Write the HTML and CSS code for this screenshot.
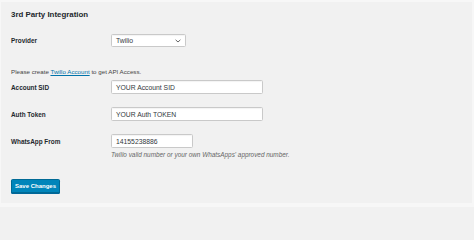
FILE: index.html
```html
<!DOCTYPE html>
<html>
<head>
<meta charset="utf-8">
<link rel="stylesheet" href="styles.css">
</head>
<body>
<div class="wrap">
  <h2 class="title">3rd Party Integration</h2>
  <div class="row row-provider">
    <div class="label">Provider</div>
    <div class="field">
      <div class="select">
        <span>Twilio</span>
        <svg class="chev" width="6" height="4" viewBox="0 0 6 4"><path d="M0.6 0.8 L3 3 L5.4 0.8" fill="none" stroke="#555" stroke-width="0.9"/></svg>
      </div>
    </div>
  </div>
  <p class="notice">Please create <a href="#">Twillo Account</a> to get API Access.</p>
  <div class="row row-first">
    <div class="label">Account SID</div>
    <div class="field"><div class="input wide">YOUR Account SID</div></div>
  </div>
  <div class="row">
    <div class="label">Auth Token</div>
    <div class="field"><div class="input wide">YOUR Auth TOKEN</div></div>
  </div>
  <div class="row">
    <div class="label">WhatsApp From</div>
    <div class="field"><div class="input short">14155238886</div></div>
  </div>
  <p class="desc">Twilio valid number or your own WhatsApps' approved number.</p>
  <button class="btn">Save Changes</button>
</div>
</body>
</html>
```
FILE: styles.css
```css
html {
  margin: 0;
  padding: 0;
  background: #f1f1f1;
}
body {
  margin: 0;
  padding: 0;
  width: 474px;
  height: 207px;
  box-sizing: border-box;
  background: #f1f1f1;
  border-style: solid;
  border-color: #f7f7f7;
  border-width: 2px 2px 4px 1px;
  font-family: "Liberation Sans", Arial, sans-serif;
  color: #444;
  overflow: hidden;
}
.wrap {
  padding-left: 10px;
  display: flex;
  flex-direction: column;
  align-items: flex-start;
}
.title {
  margin: 7px 0 0;
  font-size: 7.9px;
  line-height: 12px;
  font-weight: bold;
  color: #23282d;
}
.row {
  display: flex;
  align-items: center;
  margin-top: 13px;
  height: 14px;
}
.row-provider {
  margin-top: 13px;
  height: 13px;
}
.row-first {
  margin-top: 3px;
}
.label {
  width: 100px;
  font-size: 6.4px;
  font-weight: bold;
  color: #23282d;
}
.field {
  display: flex;
  height: 100%;
}
.select, .input {
  box-sizing: border-box;
  height: 100%;
  background: #fff;
  border: 1px solid #c9c9c9;
  border-radius: 1.5px;
  box-shadow: inset 0 1px 1px rgba(0,0,0,0.05);
  font-size: 6.8px;
  color: #32373c;
  display: flex;
  align-items: center;
  padding-left: 4px;
}
.select {
  width: 75px;
  justify-content: space-between;
  padding-right: 4px;
}
.chev {
  display: block;
}
.wide {
  width: 152px;
}
.short {
  width: 82px;
}
.notice {
  margin: 20px 0 0;
  font-size: 6.2px;
  line-height: 10px;
  color: #444;
}
.notice a {
  color: #0073aa;
  text-decoration: underline;
}
.desc {
  margin: 2px 0 0 100px;
  font-size: 6.4px;
  line-height: 9px;
  font-style: italic;
  color: #666;
}
.btn {
  margin-top: 20px;
  box-sizing: border-box;
  width: 49px;
  height: 14px;
  padding: 0;
  background: #0085ba;
  border: 1px solid #006a95;
  border-radius: 1.5px;
  color: #fff;
  font-family: "Liberation Sans", Arial, sans-serif;
  font-size: 6px;
  font-weight: bold;
  box-shadow: 0 1px 0 #006799;
}
```
